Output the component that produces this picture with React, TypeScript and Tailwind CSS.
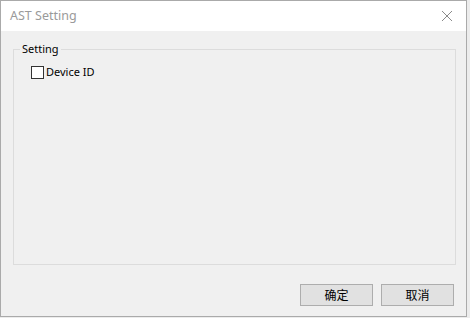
const App = () => {
  return (
    <div
      className="w-[470px] h-[318px] bg-[#ececec] overflow-hidden"
      style={{ fontFamily: '"Noto Sans", "Liberation Sans", sans-serif' }}
    >
      <div className="w-[467px] h-[317px] border border-[#aaaaaa] bg-[#f0f0f0] flex flex-col">
        {/* Title bar */}
        <div className="h-[30px] bg-white flex items-center justify-between pl-[9px] pr-[10px]">
          <span className="text-[12.5px] leading-none text-[#9a9a9a]">AST Setting</span>
          <svg width="12" height="12" viewBox="0 0 12 12" className="mr-[3px]">
            <path d="M1 1 L11 11 M11 1 L1 11" stroke="#8a8a8a" strokeWidth="1" />
          </svg>
        </div>

        {/* Group box */}
        <fieldset className="mt-[11px] ml-[12px] w-[443px] h-[223px] border border-[#dcdcdc] px-[6px] m-0 min-w-0">
          <legend className="px-[2px] text-[11px] leading-[14px] text-black">Setting</legend>
          <label className="mt-[9px] ml-[11px] flex items-center gap-[2px] text-[11px] leading-[14px] text-black">
            <span className="w-[13px] h-[13px] border border-[#333333] bg-white" />
            <span>Device ID</span>
          </label>
        </fieldset>

        {/* Buttons */}
        <div
          className="mt-[19px] flex justify-end gap-[8px] pr-[12px]"
          style={{ fontFamily: '"Noto Sans CJK SC", "Noto Sans", sans-serif' }}
        >
          <button className="w-[73px] h-[22px] border border-[#adadad] bg-[#e1e1e1] text-[12px] leading-none text-black">
            确定
          </button>
          <button className="w-[73px] h-[22px] border border-[#adadad] bg-[#e1e1e1] text-[12px] leading-none text-black">
            取消
          </button>
        </div>
      </div>
    </div>
  );
};

export default App;
